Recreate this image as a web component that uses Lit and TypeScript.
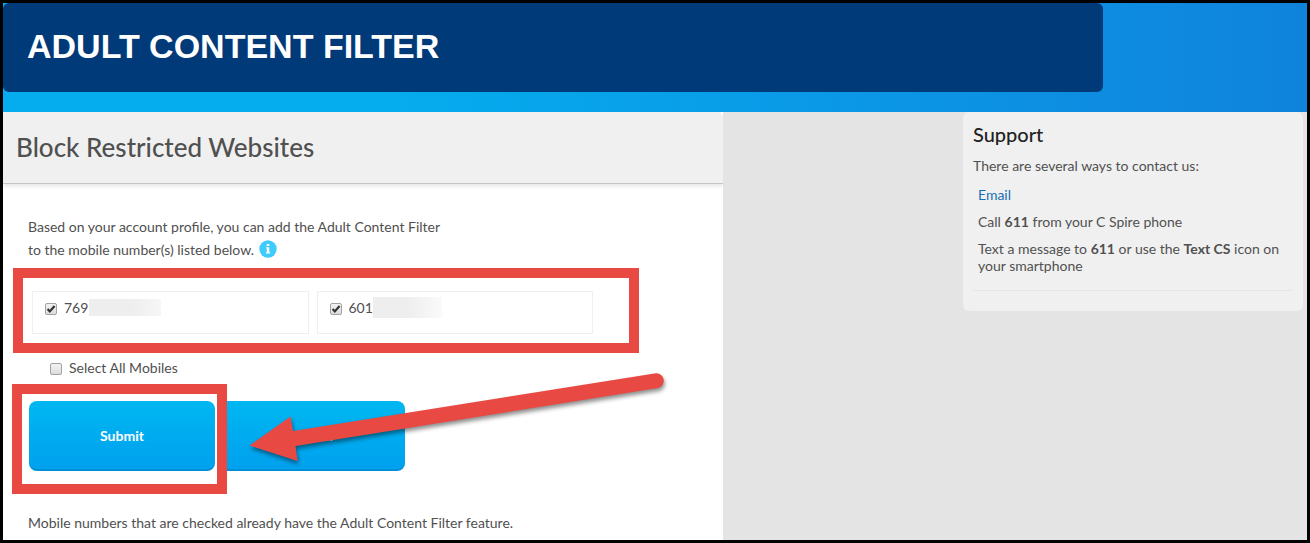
import { LitElement, html, css } from "lit";
import { customElement, property } from "lit/decorators.js";

@customElement("info-icon")
class InfoIcon extends LitElement {
  static styles = css`
    :host { display: inline-block; width: 18px; height: 18px; }
    svg { display: block; }
  `;
  render() {
    return html`<svg width="18" height="18" viewBox="0 0 18 18" aria-hidden="true">
      <circle cx="9" cy="9" r="8.7" fill="#3fcbfb"></circle>
      <path fill="#fff" d="M7.7 4h2.6v2H7.7zM7.2 7.2h3.1v5h.8v1.4H7v-1.4h.8V8.6h-.6z"></path>
    </svg>`;
  }
}

@customElement("mobile-option")
class MobileOption extends LitElement {
  @property() number = "";
  @property({ type: Boolean }) tall = false;
  static styles = css`
    :host { display: block; flex: 1; }
    .option { display: flex; align-items: flex-start; box-sizing: border-box; height: 43px; padding: 6px 12px; border: 1px solid #efefef; line-height: 20px; }
    input { appearance: none; box-sizing: border-box; width: 12px; height: 12px; margin: 5px 7px 0 0; border: 1px solid #a2a2a2; border-radius: 2px; background: linear-gradient(#f2f2f2, #dcdcdc); }
    input:checked { background: url("data:image/svg+xml,%3Csvg xmlns='http://www.w3.org/2000/svg' viewBox='0 0 10 10'%3E%3Cpath d='M1.600 5 3.800 7.400 8.600 2' fill='none' stroke='%23333' stroke-width='2.200'/%3E%3C/svg%3E"), linear-gradient(#f2f2f2, #dcdcdc); }
    .mask { width: 72px; height: 17px; margin: 1px 0 0 1px; background: linear-gradient(90deg, #eee 0 60%, #f7f7f7); }
    .mask.tall { width: 69px; height: 21px; margin: -1px 0 0; background: linear-gradient(90deg, #eee 0 50%, #fafafa); }
  `;
  render() {
    return html`<div class="option">
      <input type="checkbox" id="m" checked /><label for="m">${this.number}</label>
      <span class="mask ${this.tall ? "tall" : ""}"></span>
    </div>`;
  }
}

@customElement("support-card")
class SupportCard extends LitElement {
  static styles = css`
    :host { display: block; box-sizing: border-box; padding: 8px 10px 20px; border-radius: 6px; background: #f0f0f0; }
    h2 { margin: 0; font-size: 20px; line-height: 28px; font-weight: 500; color: #222; }
    p { margin: 0; line-height: 17px; }
    .lead { margin: 9px 0 12px; }
    .ways { display: flex; flex-direction: column; gap: 10px; padding: 0 5px 16px; border-bottom: 1px solid #e6e6e6; }
    a { color: #1b6db5; text-decoration: none; }
  `;
  render() {
    return html`<h2>Support</h2>
      <p class="lead">There are several ways to contact us:</p>
      <div class="ways">
        <p><a href="#email">Email</a></p>
        <p>Call <b>611</b> from your C Spire phone</p>
        <p>Text a message to <b>611</b> or use the <b>Text CS</b> icon on your smartphone</p>
      </div>`;
  }
}

@customElement("app-root")
class AppRoot extends LitElement {
  static styles = css`
    :host { display: flex; flex-direction: column; position: relative; box-sizing: border-box; min-height: 100vh; border: 3px solid #000; background: #e4e4e4; font: 14px/23px Lato, sans-serif; color: #505050; }
    .banner { padding: 0 204px 20px 0; background: linear-gradient(90deg, #05acee 0%, #05acee 30%, #0d8fe2 80%, #0f83dc 100%); }
    h1 { margin: 0; padding: 0 24px 2px; border-radius: 6px; background: #003a78; color: #fff; font: bold 34px/87px "Liberation Sans", Arial, sans-serif; }
    .columns { display: flex; flex: 1; justify-content: space-between; padding-right: 4px; }
    main { flex: 0 0 720px; overflow: hidden; background: #fff; }
    .head { padding: 0 13px; border-bottom: 1px solid #c6c6c6; border-radius: 0 6px 0 0; background: #f0f0f0; box-shadow: 0 2px 4px #e4e4e4; }
    h2 { margin: 0; font-size: 26px; line-height: 71px; font-weight: 500; }
    .body { padding: 31px 10px 0; }
    .intro { margin: 0; padding: 0 15px; }
    .intro info-icon { margin-left: 1px; vertical-align: -3px; }
    .numbers { display: flex; gap: 8px; box-sizing: border-box; width: 626px; margin-top: 7px; padding: 13px 36px 9px 9px; border: 10px solid #e84a43; }
    .all { display: flex; align-items: center; gap: 7px; padding: 4px 37px; }
    .all label { line-height: 22px; padding-bottom: 1px; }
    .all input { appearance: none; box-sizing: border-box; width: 12px; height: 12px; margin: 0; border: 1px solid #a2a2a2; border-radius: 2px; background: linear-gradient(#f2f2f2, #dcdcdc); }
    .actions { display: flex; margin-left: -1px; }
    .focus { z-index: 1; padding: 7px 2px 13px 7px; border: 10px solid #e84a43; }
    button { display: block; width: 186px; height: 70px; padding: 1px 0 0; border: 0; border-bottom: 2px solid #0090d8; border-radius: 8px; background: linear-gradient(#00b7f1, #00a1ee); color: #fff; font: bold 14px/20px Lato, sans-serif; }
    .second { margin: 17px 0 0 -8px; }
    .note { margin: 17px 15px 0; }
    .arrow { position: absolute; left: 237px; top: 357px; pointer-events: none; z-index: 2; filter: drop-shadow(1px 3px 2px rgba(0, 0, 0, 0.45)); }
    support-card { flex: 0 0 340px; align-self: flex-start; line-height: 17px; }
  `;
  render() {
    return html`
      <header class="banner"><h1>ADULT CONTENT FILTER</h1></header>
      <div class="columns">
        <main>
          <div class="head"><h2>Block Restricted Websites</h2></div>
          <div class="body">
            <p class="intro">Based on your account profile, you can add the Adult Content Filter<br />to the mobile number(s) listed below. <info-icon></info-icon></p>
            <div class="numbers">
              <mobile-option number="769"></mobile-option>
              <mobile-option number="601" tall></mobile-option>
            </div>
            <div class="all"><input type="checkbox" id="all" /><label for="all">Select All Mobiles</label></div>
            <div class="actions">
              <div class="focus"><button type="button">Submit</button></div>
              <button type="button" class="second">Cancel</button>
            </div>
            <p class="note">Mobile numbers that are checked already have the Adult Content Filter feature.</p>
          </div>
        </main>
        <support-card></support-card>
      </div>
      <svg class="arrow" width="440" height="120" viewBox="240 360 440 120" aria-hidden="true">
        <path fill="#e84a43" d="M249.500 445.500 290.500 416.500 293 431 656 373.200A7.500 7.500 0 0 1 658 388L295.500 446 297.500 461Z"></path>
      </svg>`;
  }
}
